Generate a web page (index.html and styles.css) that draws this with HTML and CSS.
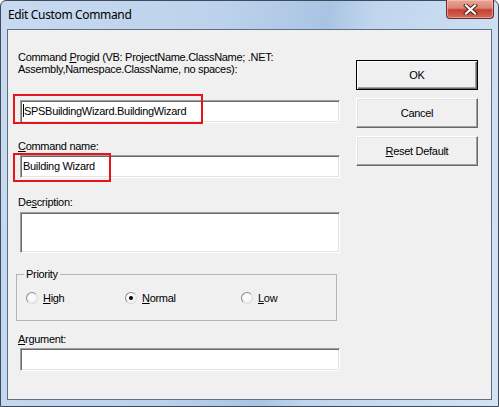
FILE: index.html
```html
<!DOCTYPE html>
<html lang="en">
<head>
    <meta charset="UTF-8">
    <title>Edit Custom Command</title>
    <link rel="stylesheet" href="styles.css">
</head>
<body>
    <div class="window">
        <div class="titlebar">
            <span class="title">Edit Custom Command</span>
            <div class="close">
                <svg width="15" height="11" viewBox="0 0 15 11">
                    <path d="M3 1.5 L12 9.5 M12 1.5 L3 9.5" stroke="#4a2018" stroke-width="4" stroke-linecap="square"/>
                    <path d="M3 1.5 L12 9.5 M12 1.5 L3 9.5" stroke="#fff" stroke-width="2.2" stroke-linecap="square"/>
                </svg>
            </div>
        </div>

        <div class="client">
            <div class="fields">
                <p class="label">Command <u>P</u>rogid (VB: ProjectName.ClassName; .NET:<br>Assembly,Namespace.ClassName, no spaces):</p>
                <div class="textbox progid">
                    <span class="caret"></span>SPSBuildingWizard.BuildingWizard
                    <span class="mark mark-progid"></span>
                </div>

                <p class="label name-label"><u>C</u>ommand name:</p>
                <div class="textbox name">
                    Building Wizard
                    <span class="mark mark-name"></span>
                </div>

                <p class="label desc-label">De<u>s</u>cription:</p>
                <div class="textbox description"></div>

                <fieldset class="priority">
                    <legend>Priority</legend>
                    <div class="options">
                        <div class="option high"><span class="radio"></span><span><u>H</u>igh</span></div>
                        <div class="option normal"><span class="radio checked"></span><span><u>N</u>ormal</span></div>
                        <div class="option low"><span class="radio"></span><span><u>L</u>ow</span></div>
                    </div>
                </fieldset>

                <p class="label arg-label"><u>A</u>rgument:</p>
                <div class="textbox argument"></div>
            </div>

            <div class="buttons">
                <div class="button default">OK</div>
                <div class="button">Cancel</div>
                <div class="button"><span><u>R</u>eset Default</span></div>
            </div>
        </div>
    </div>
</body>
</html>
```

FILE: styles.css
```css
body {
    margin: 0;
    font-family: "Liberation Sans", Arial, sans-serif;
    font-size: 11px;
    letter-spacing: -0.3px;
    color: #000;
}
u {
    text-decoration: underline;
    text-underline-offset: 1px;
}

/* window frame */
.window {
    width: 499px;
    height: 407px;
    box-sizing: border-box;
    border: 1px solid #3f4b5a;
    border-radius: 6px 6px 0 0;
    background: linear-gradient(100deg, #c7daf0 0%, #bcd2ec 40%, #a9c4e3 58%, #c0d6ee 66%, #d3e3f4 100%);
    display: flex;
    flex-direction: column;
}
.titlebar {
    height: 28px;
    display: flex;
    justify-content: space-between;
    align-items: flex-start;
}
.title {
    font-family: "Noto Sans", "Open Sans", sans-serif;
    font-size: 12px;
    letter-spacing: -0.35px;
    line-height: 16px;
    padding: 6px 0 0 7px;
    color: #000;
}
.close {
    width: 46px;
    height: 18px;
    margin: -1px 4px 0 0;
    border: 1px solid #6b2d25;
    border-top: none;
    border-radius: 0 0 4px 4px;
    background: linear-gradient(#e9a898 0%, #d98474 45%, #c4412f 55%, #d3695a 100%);
    box-shadow: inset 0 0 0 1px rgba(255, 210, 200, 0.5);
    display: flex;
    align-items: center;
    justify-content: center;
}

/* client area */
.client {
    flex: 1;
    margin: 0 6px 6px;
    border: 1px solid #5f6f82;
    background: #f0f0f0;
    display: flex;
    padding: 21px 13px 0 10px;
}
.fields {
    width: 322px;
    display: flex;
    flex-direction: column;
}
.label {
    margin: 0;
    line-height: 12px;
}
.name-label { margin-top: 17px; }
.desc-label { margin-top: 18px; }
.arg-label { margin-top: 12px; }

/* sunken edit boxes */
.textbox {
    position: relative;
    box-sizing: border-box;
    width: 320px;
    height: 23px;
    margin-left: 2px;
    padding-left: 2px;
    line-height: 21px;
    background: #fff;
    border: 1px solid;
    border-color: #a0a0a0 #fff #fff #a0a0a0;
    box-shadow: inset 1px 1px 0 #696969, inset -1px -1px 0 #e3e3e3;
}
.progid { margin-top: 25px; }
.name { margin-top: 3px; }
.description {
    margin-top: 4px;
    height: 41px;
}
.argument { margin-top: 3px; }
.caret {
    display: inline-block;
    width: 1px;
    height: 13px;
    background: #000;
    vertical-align: -2px;
}

/* red highlight boxes */
.mark {
    position: absolute;
    border: 2px solid #e8141b;
}
.mark-progid {
    left: -8px;
    top: -7px;
    width: 186px;
    height: 26px;
}
.mark-name {
    left: -8px;
    top: -3px;
    width: 94px;
    height: 25px;
}

/* group box */
.priority {
    margin: 15px 0 0 -2px;
    width: 321px;
    height: 53px;
    box-sizing: border-box;
    border: 1px solid #b4b4b4;
    padding: 0 0 0 9px;
}
.priority legend {
    padding: 0 2px;
    margin-left: -2px;
    line-height: 12px;
}
.options {
    display: flex;
    margin-top: 12px;
}
.option {
    display: flex;
    align-items: center;
    gap: 5px;
    line-height: 12px;
}
.high { width: 99px; }
.normal { width: 116px; }
.radio {
    width: 12px;
    height: 12px;
    box-sizing: border-box;
    border-radius: 50%;
    border: 1px solid;
    border-color: #8c8c8c #dcdcdc #dcdcdc #8c8c8c;
    background: radial-gradient(circle at 40% 40%, #fff 0%, #f4f4f4 60%, #e6e6e6 100%);
    display: flex;
    align-items: center;
    justify-content: center;
}
.radio.checked::after {
    content: "";
    width: 4px;
    height: 4px;
    border-radius: 50%;
    background: #000;
}

/* push buttons */
.buttons {
    margin-left: auto;
    padding-top: 9px;
    display: flex;
    flex-direction: column;
    gap: 8px;
}
.button {
    width: 122px;
    height: 30px;
    box-sizing: border-box;
    display: flex;
    align-items: center;
    justify-content: center;
    background: #f0f0f0;
    border: 1px solid;
    border-color: #fff #696969 #696969 #fff;
    box-shadow: inset -1px -1px 0 #a0a0a0, inset 1px 1px 0 #e3e3e3;
}
.button.default {
    border: 1px solid #000;
    box-shadow: inset 1px 1px 0 #fff, inset -1px -1px 0 #696969, inset -2px -2px 0 #a0a0a0;
}
```
